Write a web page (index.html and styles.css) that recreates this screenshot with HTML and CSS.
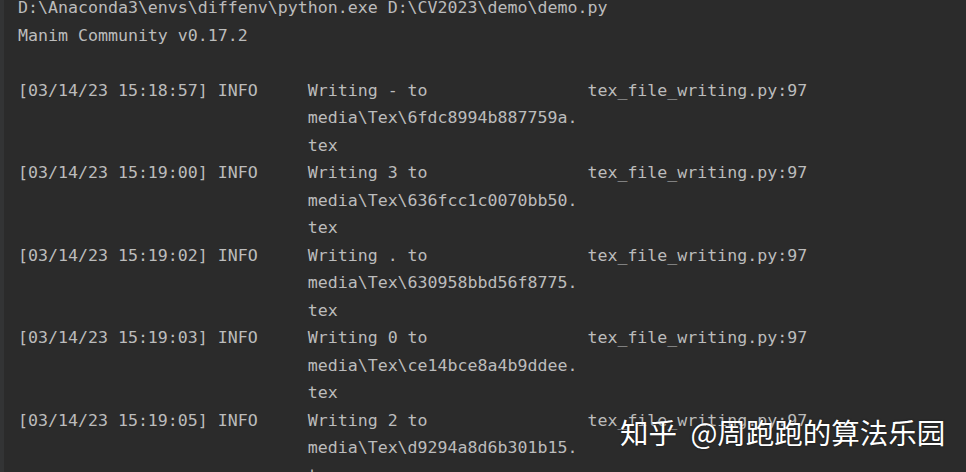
FILE: index.html
```html
<!DOCTYPE html>
<html lang="zh-CN">
  <head>
    <meta charset="UTF-8" />
    <meta name="viewport" content="width=device-width, initial-scale=1.0" />
    <title>demo</title>
    <link rel="stylesheet" href="styles.css">
  </head>
  <body>
    <!-- Console output -->
    <div class="console">
      <div class="gutter"></div>
      <div class="output">
        <div class="line">D:\Anaconda3\envs\diffenv\python.exe D:\CV2023\demo\demo.py</div>
        <div class="line">Manim Community v0.17.2</div>
        <div class="line">&nbsp;</div>

        <div class="entry">
          <div class="time">[03/14/23 15:18:57] INFO</div>
          <div class="msg">
            <div class="line">Writing - to</div>
            <div class="line">media\Tex\6fdc8994b887759a.</div>
            <div class="line">tex</div>
          </div>
          <div class="src">tex_file_writing.py:97</div>
        </div>

        <div class="entry">
          <div class="time">[03/14/23 15:19:00] INFO</div>
          <div class="msg">
            <div class="line">Writing 3 to</div>
            <div class="line">media\Tex\636fcc1c0070bb50.</div>
            <div class="line">tex</div>
          </div>
          <div class="src">tex_file_writing.py:97</div>
        </div>

        <div class="entry">
          <div class="time">[03/14/23 15:19:02] INFO</div>
          <div class="msg">
            <div class="line">Writing . to</div>
            <div class="line">media\Tex\630958bbd56f8775.</div>
            <div class="line">tex</div>
          </div>
          <div class="src">tex_file_writing.py:97</div>
        </div>

        <div class="entry">
          <div class="time">[03/14/23 15:19:03] INFO</div>
          <div class="msg">
            <div class="line">Writing 0 to</div>
            <div class="line">media\Tex\ce14bce8a4b9ddee.</div>
            <div class="line">tex</div>
          </div>
          <div class="src">tex_file_writing.py:97</div>
        </div>

        <div class="entry">
          <div class="time">[03/14/23 15:19:05] INFO</div>
          <div class="msg">
            <div class="line">Writing 2 to</div>
            <div class="line">media\Tex\d9294a8d6b301b15.</div>
            <div class="line">tex</div>
          </div>
          <div class="src">tex_file_writing.py:97</div>
        </div>
      </div>
    </div>

    <!-- Watermark -->
    <div class="watermark">知乎 @周跑跑的算法乐园</div>
  </body>
</html>
```

FILE: styles.css
```css
/* Page */
html, body {
  margin: 0;
  height: 100%;
  overflow: hidden;
  background-color: #2b2b2b;
}

/* Console area */
.console {
  display: flex;
  height: 100%;
}

.gutter {
  width: 4px;
  flex: none;
  background-color: #333435;
}

.output {
  margin-top: -6px;
  padding-left: 14px;
  font-family: "DejaVu Sans Mono", "Liberation Mono", monospace;
  font-size: 16.6px;
  line-height: 27.5px;
  color: #bcbcbc;
}

.line {
  white-space: pre;
}

/* Log rows */
.entry {
  display: grid;
  grid-template-columns: 29ch 28ch auto;
  white-space: nowrap;
}

/* Watermark over the output */
.watermark {
  position: absolute;
  left: 620px;
  top: 412px;
  font-family: "Noto Sans CJK SC", "Noto Sans", sans-serif;
  font-size: 28.5px;
  line-height: 40px;
  word-spacing: 7px;
  color: #ffffff;
  text-shadow: 0 0 2px rgba(0, 0, 0, 0.6);
  white-space: nowrap;
}
```
